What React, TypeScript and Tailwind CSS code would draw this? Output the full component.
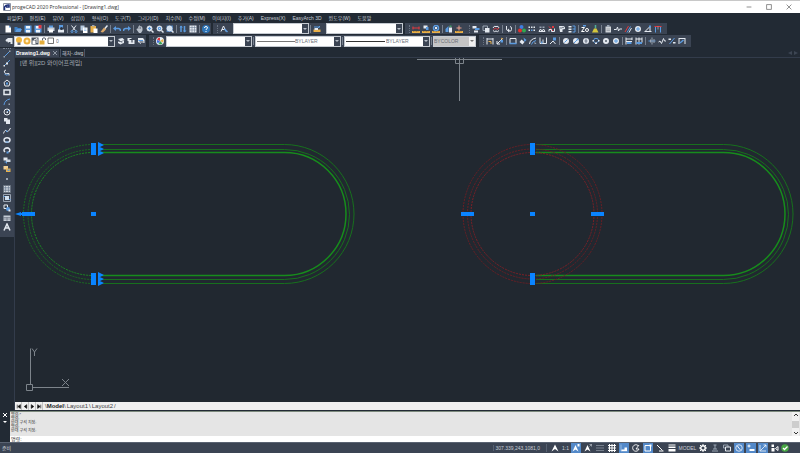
import type { ReactNode } from "react";

const W = "#e4e9f0";
const B = "#5b9be0";
const G = "#9aa4b2";
const Y = "#e9b04a";
const R = "#e0393e";

const stroke = (d: string, color = W, width = 2) => (
  <path d={d} fill="none" stroke={color} strokeWidth={width} />
);
const fill = (d: string, color = W) => <path d={d} fill={color} />;

const ruler = (
  <>
    {fill("M0 12h16v4H0z", Y)}
    {stroke("M3 12v2M6 12v2M9 12v2M12 12v2", "#7a5a1c", 1)}
  </>
);

const magnifier = (
  <>
    <circle cx="7" cy="7" r="5" fill="#cfe0f2" stroke={W} strokeWidth="2" />
    {stroke("M11 11l4 4", W, 3)}
  </>
);

const disc = (
  <circle cx="8" cy="8" r="6" fill={W} />
);

const icons: Record<string, ReactNode> = {
  new: <>{fill("M3 1h7l4 4v10H3z", "#fff")}{fill("M10 1l4 4h-4z", B)}</>,
  open: <>{fill("M1 4h5l2 2h6v2H5l-3 6H1z", "#3c7fc4")}{fill("M5 8h11l-3 6H2z", B)}</>,
  save: <>{fill("M1 1h14v14H1z", B)}{fill("M4 2h8v5H4zM4 10h8v5H4z", "#eef4fb")}</>,
  saveAs: <>{fill("M1 1h14v14H1z", B)}{fill("M4 2h8v5H4zM4 10h8v5H4z", "#eef4fb")}{fill("M9 0h6v7H9z", R)}</>,
  print: <>{fill("M4 1h8v5H4z", B)}{fill("M1 5h14v7H1z", "#c8d0db")}{fill("M4 9h8v6H4z", "#fff")}</>,
  preview: <>{fill("M4 0h8v13H4z", B)}{fill("M2 9h12v6H2z")}<circle cx="9" cy="7" r="3" fill="#2b3340" /></>,
  cut: <>{stroke("M3 1l8 10M12 1L5 11", W)}<circle cx="4" cy="13" r="2" fill="none" stroke={B} strokeWidth="2" /><circle cx="12" cy="13" r="2" fill="none" stroke={B} strokeWidth="2" /></>,
  copy: <>{fill("M1 1h8v10H1z", "#b6c9de")}{fill("M6 5h9v11H6z", "#fff")}{stroke("M8 8h5M8 11h5", B, 1)}</>,
  paste: <>{fill("M1 2h11v13H1z", Y)}{fill("M4 0h5v3H4z", G)}{fill("M7 7h8v9H7z", "#fff")}</>,
  brush: <>{stroke("M15 1L9 8", W, 3)}{fill("M8 5l4 4-6 6-5-1z", "#dba86a")}</>,
  undo: <>{stroke("M4 7h7q4 0 4 5", B, 3)}{fill("M0 7l6-5v10z", B)}</>,
  redo: <>{stroke("M12 7H5q-4 0-4 5", B, 3)}{fill("M16 7l-6-5v10z", B)}</>,
  pan: <>{fill("M4 7V3h2V1h2v1h2v1h2v2h1v6l-3 5H6L1 9l1-2z", "#b9c0ca")}{stroke("M6 3v5M9 3v5", "#4a5362", 1)}</>,
  zoomIn: <>{magnifier}{stroke("M4 7h6M7 4v6", B)}</>,
  zoomWin: <>{magnifier}{stroke("M5 5h4v4H5z", B)}</>,
  zoomPrev: <>{fill("M1 1h13v13H1z", "#4f7fb8")}{magnifier}</>,
  layers: <>{stroke("M4 2v12M11 2v12", B, 3)}{fill("M1 5l3-4 4 4zM8 11l3 4 4-4z", B)}</>,
  table: <>{fill("M1 1h14v14H1z")}{stroke("M1 5h14M1 10h14M6 1v14M11 1v14", "#5d6f87", 1)}</>,
  help: <><circle cx="8" cy="8" r="8" fill="#2c74b8" />{stroke("M5 6q0-3 3-3t3 3q0 1-3 3v1M8 12v2", "#fff")}</>,
  textStyle: <>{stroke("M2 13L7 2l5 11M4 9h6", W)}{stroke("M9 8l6 6", B, 3)}</>,
  dimStyle: <>{fill("M1 9h14v5H1z", Y)}{stroke("M2 4h12M8 8l6-6", B)}{fill("M3 6h7v4H3z")}</>,
  distance: <>{ruler}{stroke("M1 6h14", R)}{stroke("M2 3v6M14 3v6", R)}</>,
  area: <>{ruler}{fill("M3 1h8v6H3z")}{fill("M8 4h5v6H8z", B)}</>,
  mass: <>{ruler}<circle cx="8" cy="6" r="5" fill="none" stroke={B} strokeWidth="3" />{fill("M6 4h4v4H6z")}</>,
  list: <>{fill("M1 8l6-6v12H1z", B)}{fill("M8 5h6v10H8z")}{fill("M9 1h4v3H9z", "#47a36b")}</>,
  locate: <>{ruler}{stroke("M8 1v10M3 6h10", "#f0a08c")}</>,
  order: <>{fill("M1 2h8v5H1z")}{fill("M6 6h9v4H6z", B)}{fill("M4 11h8v4H4z")}</>,
  group: <>{stroke("M2 2h9v9H2z", G)}{fill("M6 6h9v9H6z")}</>,
  revision: <>{stroke("M2 6q2-5 6-3q5-2 6 3M2 11q3 4 6 1q3 3 6-1")}{stroke("M3 9l4-3 3 3 4-3", R)}</>,
  chain: <>{stroke("M3 2v6q0 3 3 3M10 3q4 0 3 6q-1 4-4 4", W)}{fill("M6 7l4 4-4 4z")}</>,
  rgb: <><circle cx="7" cy="4" r="4" fill="#3f7fe0" /><circle cx="4" cy="11" r="4" fill="#e03030" /><circle cx="12" cy="11" r="4" fill="#30a850" /></>,
  dots: <>{fill("M1 3h3v3H1zM6 3h3v3H6zM11 3h3v3h-3zM1 9h3v3H1zM11 9h3v3h-3z")}{fill("M6 9h3v3H6z", B)}</>,
  people: <>{stroke("M2 13l3-5 3 5M8 13l3-5 3 5M2 13h12")}{fill("M3 3h4v3H3zM9 3h4v3H9z", G)}</>,
  unlink: <>{stroke("M2 3l10 11", R)}{stroke("M2 13V9h5v4h6V7", W)}{fill("M8 2h4v4H8z", R)}</>,
  palette: <>{fill("M2 2h9q4 1 3 6l-5 1v5H4z")}<circle cx="6" cy="6" r="1.5" fill="#4a5362" /><circle cx="10" cy="5" r="1.5" fill="#4a5362" /></>,
  attrs: <>{fill("M1 2h6v3H1zM1 7h6v3H1zM1 12h6v3H1z")}{stroke("M9 2h5v12H9M9 8h5", B)}</>,
  z0: <>{stroke("M1 5h6L1 13h6", "#fff")}<circle cx="12" cy="10" r="3" fill="none" stroke="#fff" strokeWidth="2" />{fill("M4 0h6v3H4z", B)}</>,
  clean: <>{stroke("M9 0v7", "#4fae9a", 3)}{fill("M6 7h5l4 8H2z", "#d4c63c")}</>,
  clipboard: <>{fill("M3 3h11v12H3z", "#cfd3d8")}{fill("M6 0h5v4H6z", G)}{stroke("M5 8h7M5 11h7", "#7a828e", 1)}</>,
  breakLine: stroke("M0 9h5l2-5 2 8 2-4h5", W),
  parallel: <>{stroke("M2 14L9 2", R)}{stroke("M6 15l7-12", B)}{stroke("M10 15l5-9")}</>,
  plusDisc: <>{disc}{stroke("M8 4v8M4 8h8", B)}</>,
  angle: <>{stroke("M1 13h14M3 12L12 3v9")}{fill("M10 1h4v4h-4z", B)}</>,
  gate: <>{stroke("M3 3v12M13 3v12", B)}{stroke("M1 3h14", R)}{stroke("M8 3v6", W, 1)}</>,
  layerTool: <>{fill("M1 6l5-4h9v12h-4v-4H8l-2 2-1-3H2z")}</>,
  explore: <>{fill("M2 4l9-2 4 4-8 3zM2 9l6 1 6-3v5l-7 3-5-3z")}{stroke("M4 7l7 5", "#56616f", 1)}</>,
  layerSet: <>{fill("M1 2h8v4h6v8H3V8H1z")}{stroke("M5 5h5v6", "#2b3340")}</>,
  layerPrev: <>{fill("M2 2h10l3 4v6H8v2L2 10z")}{stroke("M3 7h9", B)}{stroke("M5 10h8", "#2b3340")}</>,
  wheel: <><circle cx="8" cy="8" r="8" fill="#e8eef6" />{fill("M8 8V1a7 7 0 0 0-6 4z", R)}{fill("M8 8l6-4a7 7 0 0 1 0 7z", Y)}{fill("M8 8l5 5a7 7 0 0 1-8 1z", "#3aa655")}{fill("M8 8l-6-2a7 7 0 0 0 2 7z", "#3f6fe0")}</>,
  dimLinear: <>{stroke("M2 2v13M2 4h12M14 2v13")}{stroke("M5 9h5v5", Y)}</>,
  dimQuick: <>{stroke("M2 14L13 3M2 8v6h6")}{fill("M9 6h5v5H9z", B)}{fill("M10 1l5 3-4 1z", Y)}</>,
  dimBox: <>{stroke("M2 3h12v10H2z")}{stroke("M1 13h14", B, 3)}</>,
  dimRotate: <>{fill("M5 5l6 5-4 5-6-5z")}{fill("M9 1l6 5-4 4z", B)}</>,
  dimArc: <>{stroke("M1 14q1-10 13-12")}{stroke("M5 15q1-6 9-8", B)}{fill("M11 9l4 5h-4z", G)}</>,
  ordinate: <>{stroke("M2 1v12h13V1M8 5v8")}{fill("M4 9h3v4H4z", B)}</>,
  jog: <>{fill("M8 1h6v6H8z", B)}{stroke("M2 14l6-6 5 6")}</>,
  radius: <>{disc}{stroke("M5 11l6-6", B)}</>,
  diameter: <>{disc}{stroke("M4 12l8-8M9 4h3v3", B)}</>,
  centerLine: <>{disc}{stroke("M8 3v10M5 8h6", "#6c7788")}</>,
  loop: <>{stroke("M3 8l2-5h6l3 5-3 2M3 8l4 5 4-3", B)}{fill("M1 6h3v3H1zM12 6h3v3h-3zM6 11h4v3H6z")}</>,
  target: <>{disc}<circle cx="8" cy="8" r="2" fill="#56616f" /></>,
  baseline: <>{stroke("M2 1v14M2 4h12M2 9h12M14 1v5", W)}{fill("M4 10h9v4H4z", B)}</>,
  contin: <>{stroke("M2 1v14M8 1v14M14 1v10M2 4h12", W)}{fill("M3 10h11v4H3z", B)}</>,
  crossDim: <>{stroke("M1 8h14", B)}{stroke("M8 1v14M5 5v6M12 4v8", G)}</>,
  wave: stroke("M1 10l3-2 3 5 4-10 2 5h3"),
  percent: <>{stroke("M3 14L13 2", B)}{fill("M1 3h5v3H1zM10 10h5v3h-5z")}</>,
  dimEdit: <>{stroke("M2 2v12M14 2v12M2 3h12")}{stroke("M4 12l7-6", B, 3)}</>,

  line: <>{stroke("M2 14L14 2", B)}{fill("M1 12h3v3H1zM12 1h3v3h-3z", G)}</>,
  ray: <>{stroke("M2 14L14 2", B)}{fill("M6 7h4v4H6zM1 12h3v3H1z")}</>,
  polyline: <>{stroke("M6 2q-5 1-3 5t9 2v4", W)}{stroke("M3 10q4 4 8 1", B)}</>,
  polygon: <>{stroke("M8 2l6 5-2 7H4L2 7z")}{fill("M6 7h4v4H6z", B)}</>,
  rect: stroke("M2 4h12v9H2z", W, 3),
  arc: <>{stroke("M2 14Q3 4 14 2", B)}{fill("M11 11h3v3h-3z", G)}</>,
  circle: <><circle cx="8" cy="8" r="6" fill="none" stroke={W} strokeWidth="2" />{stroke("M8 8l4-4", B)}{fill("M7 7h3v3H7z")}</>,
  cloud: fill("M2 2h7v3h5v9H6V9H2z"),
  spline: <>{stroke("M1 13q3-9 6-5t8-6", W)}{fill("M6 7h3v3H6z", B)}</>,
  ellipse: <><ellipse cx="8" cy="8" rx="6" ry="4.5" fill="none" stroke={W} strokeWidth="3" />{stroke("M5 12h6", B)}</>,
  ellipseArc: <>{stroke("M4 12Q0 8 4 5q5-3 9 1 2 4-2 6", W, 3)}{fill("M7 11h4v4H7z", B)}</>,
  insert: <>{fill("M1 3h8v6H1z")}{fill("M6 7h9v5H6z", "#cdd6e1")}{stroke("M3 12h4v3", B)}</>,
  block: <>{fill("M1 2h9v7H1z", "#f0cf95")}{fill("M6 7h9v7H6z", Y)}{fill("M9 9h4v3H9z", B)}</>,
  point: fill("M6 6h4v4H6z", G),
  hatch: <>{fill("M2 2h12v12H2z", "#d0d6de")}{stroke("M2 5h12M2 8h12M2 11h12M5 2v12M11 2v12", "#5d6f87", 1)}{stroke("M1 1h14v14H1z", G, 1)}</>,
  gradient: <>{stroke("M1 1h14v14H1z", G)}{fill("M4 4h8v8H4z", "#cfe0f2")}{stroke("M1 5h3M12 11h3", B)}</>,
  region: <>{stroke("M2 2h7v7H2z", W)}<circle cx="10" cy="10" r="4" fill={B} />{fill("M11 11h4v4h-4z")}</>,
  grid: <>{fill("M1 3h14v11H1z", "#c3cad4")}{stroke("M1 7h14M1 10h14M8 7v7", "#4a5362", 1)}</>,
  mtext: stroke("M2 15L8 2l6 13M4 10h8", W, 3),

  bulb: <><circle cx="8" cy="6" r="6" fill="#f2b63d" />{fill("M5 11h6v5H5z", "#6d7178")}</>,
  sun: <><circle cx="8" cy="8" r="7" fill="#eeb03c" /><circle cx="8" cy="8" r="3" fill="#fff3d0" /></>,
  freeze: <>{fill("M1 1h14v14H1z", "#4b535f")}{fill("M3 7h6v7H3z", "#fff")}{stroke("M6 6l6-3v9", "#fff")}</>,
  lock: <>{stroke("M7 7V3q3-3 6 0v3", "#555d68")}{fill("M1 7h10v8H1z", "#e4ae3c")}</>,
  swatch: <path d="M2 2h11v11H2z" fill="#fff" stroke="#444" strokeWidth="1.5" />,

  person: <>{fill("M8 1l7 14-7-5-7 5z", "#fff")}</>,
  annoA: <>{fill("M7 2l6 13-6-4-6 4z", "#fff")}{fill("M11 0h4v5h-4z", "#fff")}</>,
  annoB: <>{fill("M7 2l6 13-6-4-6 4z", "#fff")}{stroke("M11 5l4-4M11 1h4v4", W, 1)}</>,
  snap: fill("M1 2h2v2H1zM5 2h2v2H5zM9 2h2v2H9zM13 2h2v2h-2zM1 7h2v2H1zM5 7h2v2H5zM9 7h2v2H9zM13 7h2v2h-2zM1 12h2v2H1zM5 12h2v2H5zM9 12h2v2H9zM13 12h2v2h-2z", "#b4bcc8"),
  gridOn: stroke("M3 0v16M8 0v16M13 0v16M0 3h16M0 8h16M0 13h16", "#fff"),
  ortho: <>{stroke("M2 1v13h13", "#d8e8fa", 1)}{fill("M9 7h5v7H3v-3h6z", "#fff")}</>,
  polar: <><path d="M12 3a6.5 6.5 0 1 0 2 7H8l6-8" fill="none" stroke="#fff" strokeWidth="1.8" /></>,
  osnap: <>{stroke("M2 3h11v11H2z", "#fff")}{fill("M11 1h4v4h-4z", "#fff")}</>,
  otrack: <>{stroke("M2 2l11 11", "#fff", 2)}{stroke("M6 14h9", "#fff", 2)}</>,
  lwt: <>{fill("M1 1h14v2H1zM1 5h14v3H1zM1 10h14v5H1z", "#fff")}</>,
  gear: <><circle cx="8" cy="8" r="4.5" fill="none" stroke="#fff" strokeWidth="3" />{stroke("M8 0v3M8 13v3M0 8h3M13 8h3M2 2l3 3M11 11l3 3M14 2l-3 3M2 14l3-3", "#fff")}</>,
  tablet: <>{stroke("M5 2h6M8 2v8M2 14h12M4 10h8", G)}</>,
  windows: <>{stroke("M1 2h9v6H1z", G)}<path d="M5 6h10v8H5z" fill="#3b4453" stroke={W} strokeWidth="2" /></>,
  clock: <><circle cx="8" cy="8" r="6.5" fill="none" stroke="#fff" strokeWidth="1.5" />{stroke("M5 4l3 5 3 2", "#fff")}</>,
  quick: <>{stroke("M1 4h6M4 1v6", "#fff")}{fill("M5 10h10v4H5z", "#fff")}</>,
  ucs: stroke("M2 2v12h12M3 13L14 2M9 2h5v5", "#fff", 1.5),
  share: <>{fill("M1 1h5v5H1zM1 8h6v7H1z", "#fff")}{stroke("M14 5v8l-5-4z", "#fff")}</>,
  ok: <><circle cx="8" cy="8" r="7.5" fill="#48a744" />{stroke("M4 8l3 3 6-6", "#fff", 2.5)}</>,
};

function Icon({ name }: { name: string }) {
  return (
    <svg viewBox="0 0 16 16" className="size-2 shrink-0" aria-hidden="true">
      {icons[name]}
    </svg>
  );
}

function ToolButton({ name }: { name: string }) {
  return (
    <button aria-label={name} className="flex h-2 w-[10px] shrink-0 items-center justify-center">
      <Icon name={name} />
    </button>
  );
}

function Separator() {
  return <span className="mx-px h-2 w-px shrink-0 bg-[#77808e]" />;
}

function Grip() {
  return <span className="ml-1 mr-px h-2 w-0 shrink-0 border-l border-dotted border-[#6a7483]" />;
}

// "|" draws a separator, ":" a grip
function Tools({ items }: { items: string }) {
  return (
    <>
      {items.split(" ").map((item, i) =>
        item === "|" ? <Separator key={i} /> : item === ":" ? <Grip key={i} /> : <ToolButton key={i} name={item} />
      )}
    </>
  );
}

interface ComboProps {
  label: string;
  value?: string;
  width: string;
  pad?: string;
  disabled?: boolean;
  children?: ReactNode;
}

function Combo({ label, value = "", width, pad = "pl-1", disabled, children }: ComboProps) {
  return (
    <div className={`relative flex h-[11px] shrink-0 items-center ${width}`}>
      <select
        aria-label={label}
        disabled={disabled}
        className={`h-full w-full appearance-none border border-[#c5cad1] text-[5px] leading-[9px] text-[#6a6f77] ${pad} ${
          disabled ? "bg-[#c4c4c4] opacity-100" : "bg-white"
        }`}
      >
        <option>{value}</option>
      </select>
      <div className="pointer-events-none absolute inset-y-0 left-0 flex items-center">{children}</div>
      <span
        className={`pointer-events-none absolute inset-y-px right-px flex w-[6px] items-center justify-center ${
          disabled ? "bg-[#f0f0f0]" : "bg-[#3b4453]"
        }`}
      >
        <svg viewBox="0 0 4 2" className="h-[2px] w-1">
          <path d="M0 0h4L2 2z" fill={disabled ? "#777" : "#b9c0ca"} />
        </svg>
      </span>
    </div>
  );
}

const menus = [
  "파일(F)", "편집(E)", "뷰(V)", "삽입(I)", "형식(O)", "도구(T)", "그리기(D)", "치수(N)", "수정(M)",
  "이미지(I)", "추가(A)", "Express(X)", "EasyArch 3D", "윈도우(W)", "도움말",
];

const drawTools =
  "line ray polyline polygon rect arc circle cloud spline ellipse ellipseArc insert block point hatch gradient region grid mtext".split(" ");

const statusTools: { name: string; on?: boolean }[] = [
  { name: "annoA", on: true },
  { name: "annoB" },
  { name: "snap" },
  { name: "gridOn" },
  { name: "ortho", on: true },
  { name: "polar" },
  { name: "osnap", on: true },
  { name: "otrack" },
  { name: "lwt" },
];

const statusToolsRight: { name: string; on?: boolean }[] = [
  { name: "gear" },
  { name: "tablet" },
  { name: "windows" },
  { name: "clock", on: true },
  { name: "quick", on: true },
  { name: "ucs", on: true },
  { name: "share" },
];

function StatusButton({ name, on }: { name: string; on?: boolean }) {
  return (
    <button
      aria-label={name}
      className={`mx-px flex size-[10px] shrink-0 items-center justify-center ${on ? "bg-[#5389c9]" : ""}`}
    >
      <Icon name={name} />
    </button>
  );
}

// open slot: two straight runs closed by a half circle on the right
function slot(x1: number, x2: number, top: number, bottom: number) {
  const r = (bottom - top) / 2;
  return `M${x1} ${top}H${x2}A${r} ${r} 0 0 1 ${x2} ${bottom}H${x1}`;
}

function Drawing() {
  return (
    <svg viewBox="15 58 785 345" preserveAspectRatio="xMinYMin slice" className="block h-full w-full">
      <g stroke="#7d848b" fill="none">
        <path d="M417 59.5H502M459.5 58V101" />
        <path d="M455.5 55.5h8v8h-8z" />
        <path d="M26.5 384.5h6v6h-6zM30.5 384V348.5M33 387.5H69" />
        <path d="M32 348.5l2.500 3.500l2.500-3.500M34.500 352v4M62 379l7 7M69 379l-7 7" />
      </g>

      <g fill="none" stroke="#17701d">
        <path d={slot(100, 284.5, 144.5, 283.5)} />
        <path d={slot(100, 284.5, 149.5, 279.5)} />
        <path d={slot(100, 284.5, 152.5, 275.5)} stroke="#178c1c" strokeWidth="1.5" />
        <path d={slot(536, 723.5, 144.5, 283.5)} />
        <path d={slot(536, 723.5, 149.5, 279.5)} />
        <path d={slot(536, 723.5, 152.5, 275.5)} stroke="#178c1c" strokeWidth="1.5" />
      </g>

      <g fill="none" stroke="#1a6a22" strokeDasharray="2 1">
        <path d="M93 144.500A69.500 69.500 0 0 0 93 283.500" />
        <path d="M93 149.500A65 65 0 0 0 93 279.500" />
        <path d="M93 152.500A61.500 61.500 0 0 0 93 275.500" stroke="#1a8a22" />
      </g>

      <g fill="none" stroke="#6b1e24" strokeDasharray="2 1">
        <circle cx="532.5" cy="214" r="69.5" />
        <circle cx="532.5" cy="214" r="65" />
        <circle cx="532.5" cy="214" r="61.5" stroke="#7d2026" />
      </g>

      <g fill="#0a84ff">
        <path d="M91 143h5v12h-5zM91 273h5v12h-5zM91 212h5v4h-5z" />
        <path d="M98 142l6 3l-6 3zM98 146l6 3l-6 3zM98 150l6 3l-6 3z" />
        <path d="M98 272l6 3l-6 3zM98 276l6 3l-6 3zM98 280l6 3l-6 3z" />
        <path d="M22 212h13v4H22zM15 214l6-2v1h2v2h-2v1z" />
        <path d="M530 143h5v12h-5zM530 273h5v12h-5zM530 212h5v4h-5z" />
        <path d="M461 212h13v4h-13zM591 212h13v4h-13z" />
      </g>
    </svg>
  );
}

export default function App() {
  return (
    <div className="flex h-screen flex-col overflow-hidden bg-[#222a34] font-['Liberation_Sans','Noto_Sans_CJK_KR',sans-serif] text-[5px] leading-[6px] text-[#c9ced6]">
      <header className="flex h-[13px] shrink-0 items-center border-t border-[#c8c8c8] bg-white pl-[3px] text-[#333]">
        <svg viewBox="0 0 16 16" className="mr-px size-2">
          <path d="M1 1h14v14H1z" fill="#fff" stroke="#8b93a5" strokeWidth="2" />
          <path d="M3 14V8q3-5 9-4v4H6" fill="none" stroke="#1d2f7a" strokeWidth="3" />
        </svg>
        <h1 className="font-['Open_Sans',sans-serif]">progeCAD 2020 Professional - [Drawing1.dwg]</h1>
        <div className="ml-auto flex gap-[10px] pr-[6px]">
          {["M1 5h8", "M1 1h8v8H1z", "M1 1l8 8M9 1L1 9"].map((d, i) => (
            <button key={d} aria-label={["Minimize", "Maximize", "Close"][i]} className="flex w-[10px] justify-center">
              <svg viewBox="0 0 10 10" className="size-[6px]">
                <path d={d} fill="none" stroke="#666" strokeWidth="1.2" />
              </svg>
            </button>
          ))}
        </div>
      </header>

      <nav className="flex h-[10px] shrink-0 items-center gap-[7px] pl-[7px]">
        {menus.map((menu) => (
          <button key={menu} className="shrink-0 whitespace-nowrap">{menu}</button>
        ))}
      </nav>

      <div className="flex h-3 shrink-0 gap-[2px]">
        <div className="flex h-[11px] items-center bg-[#3b4453] pl-[3px]">
          <Tools items="new open save saveAs | print preview | cut copy paste brush | undo redo | pan zoomIn zoomWin zoomPrev | layers table | help" />
        </div>
        <div className="flex h-[11px] items-center bg-[#3b4453]">
          <Grip />
          <ToolButton name="textStyle" />
          <span className="w-1" />
          <Combo label="Text style" width="w-[76px]" />
          <Tools items="| dimStyle" />
          <span className="w-1" />
          <Combo label="Dimension style" width="w-[77px]" />
        </div>
        <div className="flex h-[11px] items-center bg-[#3b4453] pr-1">
          <Tools items=": distance area mass | list locate" />
          <span className="w-px" />
          <Tools items=": order group revision | chain | rgb dots people unlink palette attrs | z0 clean | clipboard breakLine parallel plusDisc angle gate" />
        </div>
      </div>

      <div className="flex h-[13px] shrink-0 gap-[3px]">
        <div className="flex h-3 items-center bg-[#3b4453] pl-1">
          <ToolButton name="layerTool" />
          <Combo label="Layer" value="0" width="w-[101px]" pad="pl-[41px]">
            <span className="flex pl-px">
              {["bulb", "sun", "freeze", "lock", "swatch"].map((name) => (
                <Icon key={name} name={name} />
              ))}
            </span>
          </Combo>
          <span className="w-px" />
          <Tools items="explore layerSet layerPrev" />
        </div>
        <div className="flex h-3 items-center bg-[#3b4453]">
          <Grip />
          <ToolButton name="wheel" />
          <span className="w-px" />
          <Combo label="Color" width="w-[86px]" />
          <Separator />
          <Combo label="Linetype" value="BYLAYER" width="w-[86px]" pad="pl-[39px]">
            <span className="ml-[2px] h-px w-[38px] bg-[#777]" />
          </Combo>
          <Separator />
          <Combo label="Lineweight" value="BYLAYER" width="w-[86px]" pad="pl-[41px]">
            <span className="ml-[2px] h-px w-[39px] bg-[#333]" />
          </Combo>
          <Separator />
          <Combo label="Plot style" value="BYCOLOR" width="w-[43px]" pad="pl-0" disabled />
        </div>
        <div className="flex h-3 items-center bg-[#3b4453] pr-1">
          <Tools items=": dimLinear dimQuick | dimBox dimRotate dimArc ordinate jog | radius diameter centerLine loop target plusDisc | baseline contin | crossDim wave percent dimEdit" />
        </div>
      </div>

      <div className="flex min-h-0 flex-1">
        <aside className="w-[14px] shrink-0">
          <div className="flex flex-col bg-[#3b4453] pb-[5px]">
            <span className="mx-auto w-2 border-t border-dotted border-[#7d8796]" />
            <div className="grid h-[183px] auto-rows-fr justify-items-center pr-px">
              {drawTools.map((name) => (
                <button key={name} aria-label={name} className="flex items-center">
                  <Icon name={name} />
                </button>
              ))}
            </div>
          </div>
        </aside>

        <main className="flex min-w-0 flex-1 flex-col border-l border-[#333c4b]">
          <div className="flex h-[10px] shrink-0 items-end border-b border-[#333c4b]">
            <button className="flex h-2 items-center gap-[3px] bg-[#3b4453] px-px font-bold text-white">
              Drawing1.dwg
              <svg viewBox="0 0 8 8" className="mr-px size-1">
                <path d="M0 0l8 8M8 0L0 8" stroke="#aab1bc" strokeWidth="1.5" />
              </svg>
            </button>
            <button className="ml-px flex h-2 items-center border-x border-[#4a5362] px-px">해치-.dwg</button>
            <div className="ml-auto flex gap-[2px] pr-[2px] pb-[2px]">
              <svg viewBox="0 0 4 4" className="size-1"><path d="M4 0v4L0 2z" fill="#3d4653" /></svg>
              <svg viewBox="0 0 4 4" className="size-1"><path d="M0 0v4l4-2z" fill="#3d4653" /></svg>
            </div>
          </div>
          <div className="relative min-h-0 flex-1 bg-[#212830]">
            <Drawing />
            <p className="absolute top-[2px] left-[5px] text-[6px] text-[#a3a9b0]">[맨 위][2D 와이어프레임]</p>
          </div>
          <div className="flex h-2 shrink-0 items-center bg-[#f0f0f0] text-[6px] text-[#444]">
            {["M2 1v6M7 1v6L3 4z", "M6 1v6L2 4z", "M2 1v6l4-3z", "M6 1v6M1 1v6l4-3z"].map((d, i) => (
              <button key={d} aria-label={["First", "Previous", "Next", "Last"][i]} className="flex h-2 w-[7px] items-center justify-center border-r border-[#c4c4c4]">
                <svg viewBox="0 0 8 8" className="size-[5px]">
                  <path d={d} fill="#111" stroke="#111" />
                </svg>
              </button>
            ))}
            <span className="ml-[2px]">\</span>
            <button className="font-bold text-[#222]">Model</button>
            <span>\</span>
            <button className="mx-px">Layout1</button>
            <span>\</span>
            <button className="mx-px">Layout2</button>
            <span>/</span>
          </div>
        </main>
      </div>

      <section className="mt-px flex h-[31px] shrink-0">
        <div className="flex w-[10px] flex-col items-center gap-1 pt-[2px]">
          <button aria-label="Close command line" className="flex">
            <svg viewBox="0 0 8 8" className="size-1"><path d="M0 0l8 8M8 0L0 8" stroke="#fff" strokeWidth="2" /></svg>
          </button>
          <button aria-label="Command line options" className="flex">
            <svg viewBox="0 0 8 4" className="h-[2px] w-1"><path d="M0 0h8L4 4z" fill="#fff" /></svg>
          </button>
        </div>
        <div className="flex flex-1 flex-col border-t border-[#7d8a7d] text-[#333]">
          <div className="flex h-6 bg-[#e5e5e5]">
            <div className="flex h-full flex-1 flex-col justify-end overflow-hidden pb-[3px] pl-px text-[4px] leading-1">
              <p>명령:*</p>
              <p>명령:</p>
              <p>반대 구석 지정:</p>
              <p>명령:</p>
              <p>반대 구석 지정:</p>
            </div>
            <div className="mr-px flex w-[7px] flex-col items-center justify-between bg-[#f0f0f0] py-[2px]">
              <svg viewBox="0 0 8 4" className="h-[2px] w-1"><path d="M0 4l4-4 4 4" fill="none" stroke="#333" strokeWidth="2" /></svg>
              <span className="h-[7px] w-full bg-[#cdcdcd]" />
              <svg viewBox="0 0 8 4" className="h-[2px] w-1"><path d="M0 0l4 4 4-4" fill="none" stroke="#333" strokeWidth="2" /></svg>
            </div>
          </div>
          <label className="flex h-[6px] items-center bg-white pl-px">
            명령:
            <input type="text" className="h-[5px] flex-1 outline-none" />
          </label>
        </div>
      </section>

      <footer className="flex h-[11px] shrink-0 items-center border-t border-[#5a6372] bg-[#3b4453] pl-[2px]">
        <span>준비</span>
        <div className="ml-auto flex items-center pr-[11px]">
          <span className="mr-[6px] border-l border-[#566070] pl-[2px]">307.339,243.1081,0</span>
          <span className="mr-[2px] h-2 border-l border-[#566070]" />
          <StatusButton name="person" />
          <span className="w-[9px] text-center">1:1</span>
          {statusTools.map((tool) => (
            <StatusButton key={tool.name} {...tool} />
          ))}
          <button className="w-[19px] text-center">MODEL</button>
          {statusToolsRight.map((tool) => (
            <StatusButton key={tool.name} {...tool} />
          ))}
          <Icon name="ok" />
        </div>
      </footer>
    </div>
  );
}
